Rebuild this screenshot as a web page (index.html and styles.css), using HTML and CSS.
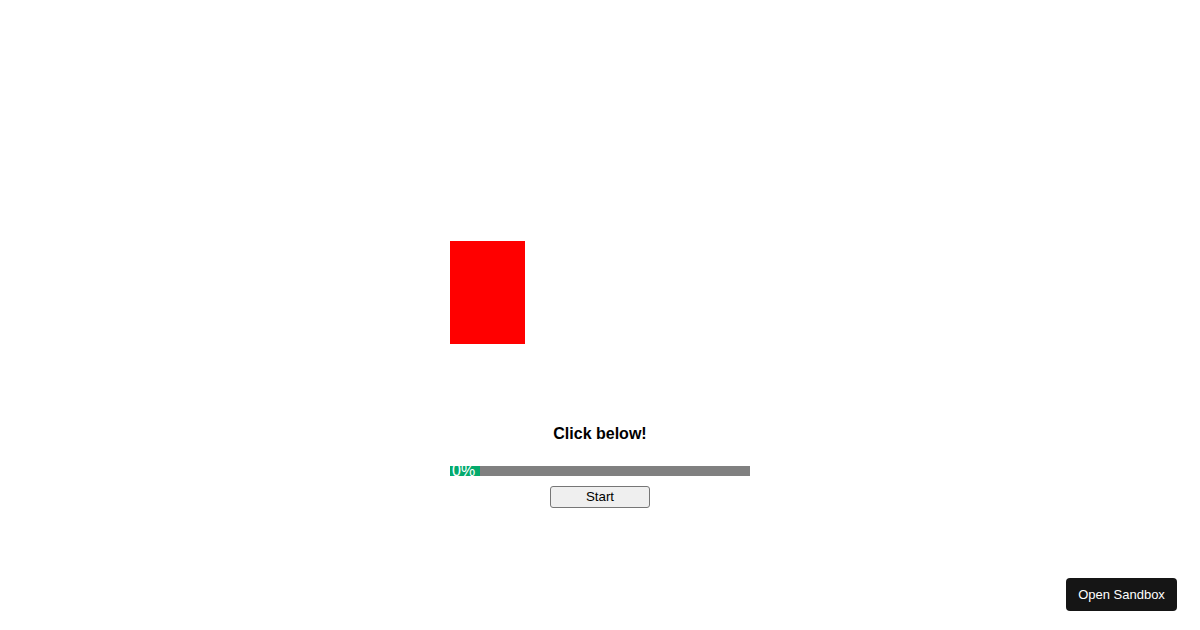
FILE: index.html
```html
<!DOCTYPE html>
<html>
<head>
<meta charset="utf-8">
<link rel="stylesheet" href="styles.css">
</head>
<body>
<div class="stage">
  <div class="box"></div>
  <h3 class="title">Click below!</h3>
  <div class="bar">
    <div class="fill" style="width:10%">0%</div>
  </div>
  <div class="actions">
    <button class="start">Start</button>
  </div>
</div>
<a class="sandbox">Open Sandbox</a>
</body>
</html>
```

FILE: styles.css
```css
html, body {
  margin: 0;
  padding: 0;
  background: #fff;
}
body {
  font-family: "Liberation Sans", Arial, sans-serif;
}
.stage {
  width: 300px;
  margin: 0 auto;
  padding-top: 241px;
}
.box {
  width: 75px;
  height: 103px;
  background: #ff0000;
}
.title {
  margin: 81px 0 0;
  font-size: 16px;
  line-height: 18px;
  font-weight: bold;
  text-align: center;
  color: #000;
}
.bar {
  margin-top: 23px;
  height: 10px;
  background: #808080;
}
.fill {
  height: 10px;
  background: #04aa6d;
  color: #fff;
  font-size: 16px;
  line-height: 10px;
  padding-left: 2px;
  box-sizing: border-box;
  white-space: nowrap;
}
.actions {
  margin-top: 10px;
  display: flex;
  justify-content: center;
}
.start {
  width: 100px;
  height: 22px;
  font-family: "Liberation Sans", Arial, sans-serif;
  font-size: 13.33px;
  background: #efefef;
  border: 1px solid #767676;
  border-radius: 3px;
  color: #000;
  padding: 0 0 2px;
}
.sandbox {
  position: fixed;
  right: 23px;
  bottom: 19px;
  width: 111px;
  height: 33px;
  display: flex;
  align-items: center;
  justify-content: center;
  background: #151515;
  color: #fff;
  border-radius: 4px;
  font-size: 13px;
  box-sizing: border-box;
}
```
